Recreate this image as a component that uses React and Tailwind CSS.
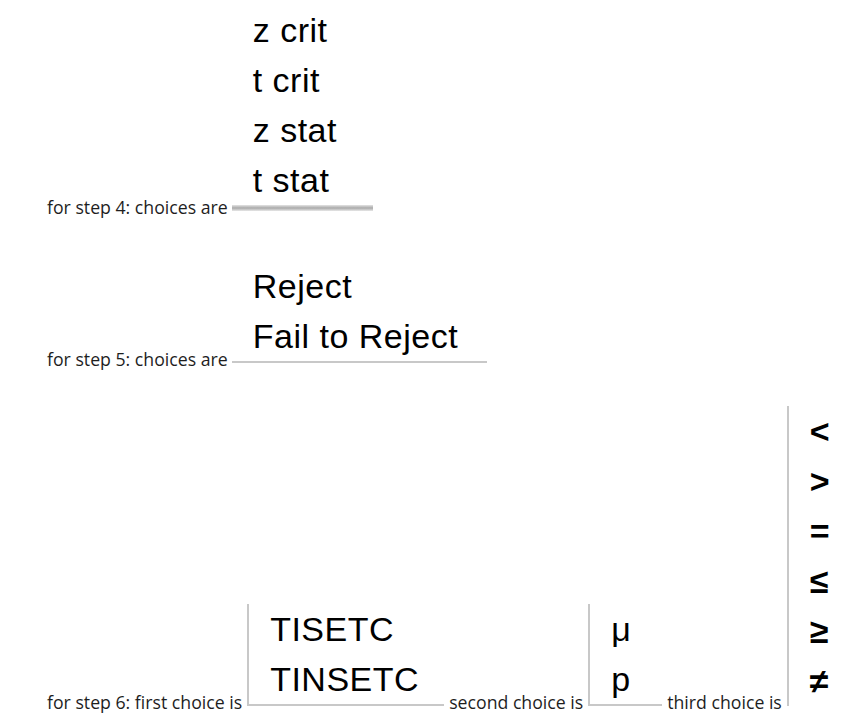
const optText = "font-['Liberation_Sans',Arial,sans-serif] text-[34px] tracking-[0.5px] text-black";

const ListBox = ({ options, width, pad = "pl-[21px]", left = false, bottom = "line", bold = false }) => (
  <div className={`flex flex-col shrink-0 ${left ? "border-l-2 border-[#c8c8c8]" : ""}`} style={{ width }}>
    {options.map((o) => (
      <div
        key={o}
        className={`h-[50px] leading-[50px] whitespace-nowrap ${pad} ${optText} ${bold ? "font-bold text-[26px]" : ""}`}
      >
        {o}
      </div>
    ))}
    {bottom === "shadow" && (
      <div className="h-[6px] bg-linear-to-b from-[#e4e4e4] via-[#a9a9a9] to-[#e8e8e8]" />
    )}
    {bottom === "line" && <div className="h-[2px] bg-[#c8c8c8]" />}
  </div>
);

const Label = ({ children }) => (
  <span className="text-[17.7px] leading-none text-[#1e1e1e] whitespace-nowrap mb-[-6px] font-['Open_Sans','Noto_Sans',sans-serif]">
    {children}
  </span>
);

const App = () => {
  return (
    <div className="w-[866px] h-[726px] bg-white overflow-hidden pl-[47px] pt-[5px]">
      {/* step 4 */}
      <div className="flex items-end gap-[4px]">
        <Label>for step 4: choices are</Label>
        <ListBox
          options={["z crit", "t crit", "z stat", "t stat"]}
          width="141px"
          bottom="shadow"
        />
      </div>

      {/* step 5 */}
      <div className="flex items-end gap-[4px] mt-[50px]">
        <Label>for step 5: choices are</Label>
        <ListBox options={["Reject", "Fail to Reject"]} width="255px" />
      </div>

      {/* step 6 */}
      <div className="flex items-end gap-[5px] mt-[43px]">
        <Label>for step 6: first choice is</Label>
        <ListBox options={["TISETC", "TINSETC"]} width="197px" left />
        <Label>second choice is</Label>
        <ListBox options={["μ", "p"]} width="74px" left />
        <Label>third choice is</Label>
        <ListBox
          options={["<", ">", "=", "≤", "≥", "≠"]}
          width="76px"
          left
          bold
          bottom="none"
        />
      </div>
    </div>
  );
};

export default App;
